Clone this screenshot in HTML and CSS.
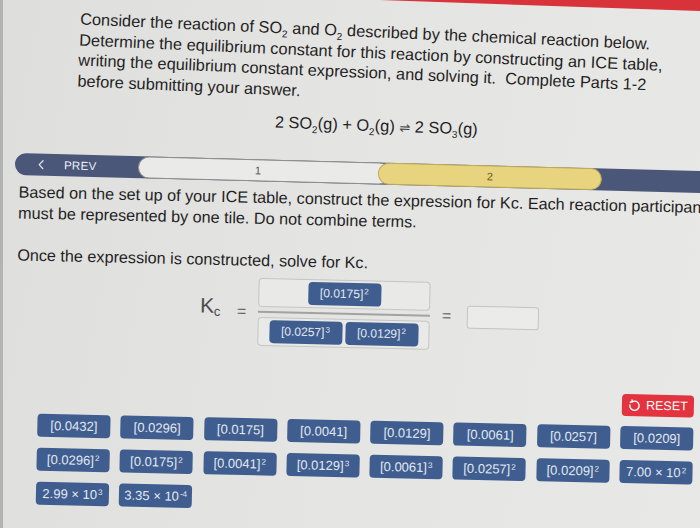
FILE: index.html
```html
<!DOCTYPE html>
<html>
<head>
<meta charset="utf-8">
<title>Equilibrium constant</title>
<link rel="stylesheet" href="styles.css">
</head>
<body>
<div class="screen">
  <div class="topbar"></div>
  <p class="intro">Consider the reaction of SO<sub>2</sub> and O<sub>2</sub> described by the chemical reaction below. Determine the equilibrium constant for this reaction by constructing an ICE table, writing the equilibrium constant expression, and solving it.&nbsp; Complete Parts 1-2 before submitting your answer.</p>
  <p class="equation">2 SO<sub>2</sub>(g) + O<sub>2</sub>(g) <span class="arrow">⇌</span> 2 SO<sub>3</sub>(g)</p>

  <nav class="steps">
    <div class="prev">
      <svg class="chevron" width="6" height="10" viewBox="0 0 6 10"><path d="M5 1 L1.2 5 L5 9" fill="none" stroke="#e3e6ee" stroke-width="1.2" stroke-linecap="round" stroke-linejoin="round"/></svg>
      <span>PREV</span>
    </div>
    <div class="step step-done">1</div>
    <div class="step step-current">2</div>
  </nav>

  <div class="prompt">
    <p>Based on the set up of your ICE table, construct the expression for Kc. Each reaction participant must be represented by one tile. Do not combine terms.</p>
    <p class="prompt-second">Once the expression is constructed, solve for Kc.</p>
  </div>

  <div class="expression">
    <div class="kc">K<sub>c</sub></div>
    <div class="equals">=</div>
    <div class="fraction">
      <div class="slot"><span class="tile tile-placed">[0.0175]<sup>2</sup></span></div>
      <div class="bar"></div>
      <div class="slot"><span class="tile tile-placed">[0.0257]<sup>3</sup></span><span class="tile tile-placed">[0.0129]<sup>2</sup></span></div>
    </div>
    <div class="equals equals-result">=</div>
    <div class="answer"></div>
  </div>

  <div class="bank">
    <div class="bank-head">
      <button class="reset">
        <svg width="13" height="13" viewBox="0 0 14 14"><path d="M4.6 2.6 A5 5 0 1 1 2.1 6.2" fill="none" stroke="#fff" stroke-width="1.5" stroke-linecap="round"/><path d="M4.3 0.6 L4.7 2.7 L2.6 3.3" fill="none" stroke="#fff" stroke-width="1.5" stroke-linecap="round" stroke-linejoin="round"/></svg>
        <span>RESET</span>
      </button>
    </div>
    <div class="tiles">
      <span class="tile">[0.0432]</span>
      <span class="tile">[0.0296]</span>
      <span class="tile">[0.0175]</span>
      <span class="tile">[0.0041]</span>
      <span class="tile">[0.0129]</span>
      <span class="tile">[0.0061]</span>
      <span class="tile">[0.0257]</span>
      <span class="tile">[0.0209]</span>
      <span class="tile">[0.0296]<sup>2</sup></span>
      <span class="tile">[0.0175]<sup>2</sup></span>
      <span class="tile">[0.0041]<sup>2</sup></span>
      <span class="tile">[0.0129]<sup>3</sup></span>
      <span class="tile">[0.0061]<sup>3</sup></span>
      <span class="tile">[0.0257]<sup>2</sup></span>
      <span class="tile">[0.0209]<sup>2</sup></span>
      <span class="tile">7.00 × 10<sup>2</sup></span>
      <span class="tile">2.99 × 10<sup>3</sup></span>
      <span class="tile">3.35 × 10<sup>-4</sup></span>
    </div>
  </div>
</div>
</body>
</html>
```

FILE: styles.css
```css
* { box-sizing: border-box; }

html, body {
  margin: 0;
  padding: 0;
  overflow: hidden;
}

body {
  background: #e3e3e1;
  font-family: "Liberation Sans", Arial, sans-serif;
  color: #1f1f1f;
}

.screen {
  width: 700px;
  height: 528px;
  overflow: hidden;
  background: linear-gradient(100deg, #dededc 0%, #e4e4e2 45%, #e8e8e6 100%);
  box-shadow: inset 3px 0 0 #b3b3b1;
}

.topbar {
  height: 12px;
  margin-bottom: -12px;
  background: #d8323a;
  clip-path: polygon(380px 0, 100% 0, 100% 11px);
}

/* intro */
.intro {
  margin: 0;
  padding: 5px 0 0 79px;
  width: 680px;
  font-size: 16.4px;
  line-height: 20.5px;
  transform-origin: 0 50%;
  transform: rotate(2.5deg);
}

.intro sub,
.equation sub {
  font-size: 10px;
  line-height: 0;
  vertical-align: -4px;
}

.equation {
  margin: 15px 0 0;
  padding-left: 79px;
  width: 674px;
  text-align: center;
  font-size: 16.4px;
  line-height: 20px;
  transform-origin: 0 50%;
  transform: rotate(2deg);
}

.arrow {
  font-family: "DejaVu Sans", sans-serif;
  font-size: 13px;
  color: #444;
}

/* step navigation */
.steps {
  display: flex;
  margin: 29px 0 0 15px;
  width: 700px;
  height: 22px;
  background: #4a5779;
  border-radius: 11px 0 0 11px;
  transform-origin: 0 50%;
  transform: rotate(1.5deg);
}

.prev {
  width: 123px;
  display: flex;
  align-items: center;
  color: #eef0f4;
  font-size: 11.5px;
  letter-spacing: 0.3px;
}

.chevron {
  margin-left: 23px;
  margin-right: 20px;
}

.step {
  height: 22px;
  border-radius: 11px;
  display: flex;
  align-items: center;
  justify-content: center;
  font-size: 11px;
}

.step-done {
  width: 252px;
  padding-right: 12px;
  background: #eaeae8;
  border: 1px solid #8f8f8d;
  color: #555;
}

.step-current {
  position: relative;
  z-index: 1;
  width: 224px;
  margin-left: -12px;
  background: #e8d37f;
  border: 1px solid #c2ab5a;
  color: #6a5a25;
}

/* prompt */
.prompt {
  margin-top: 6px;
  padding-left: 18px;
  width: 720px;
  font-size: 16.2px;
  line-height: 20.5px;
  transform-origin: 0 50%;
  transform: rotate(1.3deg);
}

.prompt p { margin: 0; }

.prompt .prompt-second { margin-top: 22px; }

/* expression */
.expression {
  display: flex;
  align-items: center;
  margin-top: 7px;
  padding-left: 200px;
  height: 68px;
  transform-origin: 0 50%;
  transform: rotate(1.3deg);
}

.kc {
  width: 37px;
  padding-bottom: 10px;
  font-size: 21px;
  color: #4d4d4d;
}

.kc sub {
  font-size: 13px;
  line-height: 0;
  vertical-align: -3px;
}

.equals {
  width: 21px;
  font-size: 16px;
  color: #666;
}

.equals-result {
  width: 25px;
  margin-left: 12px;
}

.fraction {
  width: 172px;
  display: flex;
  flex-direction: column;
}

.slot {
  height: 29px;
  border: 1px solid #c5c5c3;
  border-radius: 4px;
  background: #e9e9e7;
  display: flex;
  justify-content: center;
  align-items: center;
  gap: 3px;
}

.bar {
  height: 2px;
  margin: 4px 0;
  background: #a2a2a0;
}

.answer {
  width: 72px;
  height: 23px;
  border: 1px solid #c4c4c2;
  border-radius: 3px;
  background: #ebebea;
}

/* tile bank */
.bank {
  margin-top: 41px;
  padding-left: 37px;
  width: 693px;
  transform-origin: 0 50%;
  transform: rotate(1.2deg);
}

.bank-head {
  display: flex;
  justify-content: flex-end;
  height: 22px;
}

.reset {
  width: 72px;
  height: 22px;
  padding: 0;
  border: 0;
  border-radius: 4px;
  background: #e2333e;
  color: #fff;
  font-family: "Liberation Sans", Arial, sans-serif;
  font-size: 12.5px;
  display: flex;
  align-items: center;
  justify-content: center;
  gap: 5px;
}

.tiles {
  display: grid;
  grid-template-columns: repeat(8, 73px);
  column-gap: 10.3px;
  row-gap: 11px;
  margin-top: 10px;
}

.tile {
  display: block;
  width: 73px;
  height: 23px;
  border-radius: 4px;
  background: #3f5e8f;
  color: #e2e8f1;
  font-size: 13px;
  line-height: 23px;
  text-align: center;
  white-space: nowrap;
}

.tile-placed {
  font-size: 12px;
}

.tile sup {
  font-size: 8px;
  line-height: 0;
  vertical-align: 4px;
  margin-left: 1px;
}
```
